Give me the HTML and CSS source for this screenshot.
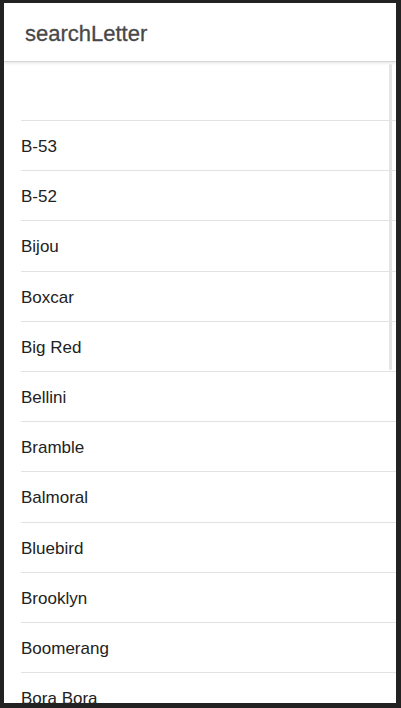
FILE: index.html
```html
<!DOCTYPE html>
<html>
<head>
  <meta charset="UTF-8">
  <title>searchLetter</title>
  <link rel="stylesheet" href="styles.css">
</head>
<body>
  <div class="frame">
    <div class="app">
      <div class="header">
        <h1>searchLetter</h1>
      </div>
      <div class="content">
        <ul class="list">
          <li class="item blank"></li>
          <li class="item">B-53</li>
          <li class="item">B-52</li>
          <li class="item">Bijou</li>
          <li class="item">Boxcar</li>
          <li class="item">Big Red</li>
          <li class="item">Bellini</li>
          <li class="item">Bramble</li>
          <li class="item">Balmoral</li>
          <li class="item">Bluebird</li>
          <li class="item">Brooklyn</li>
          <li class="item">Boomerang</li>
          <li class="item">Bora Bora</li>
        </ul>
        <div class="scrollbar"></div>
      </div>
    </div>
  </div>
</body>
</html>
```

FILE: styles.css
```css
html, body {
  margin: 0;
  padding: 0;
  background: #222;
  font-family: "Liberation Sans", Arial, sans-serif;
}
.frame {
  width: 401px;
  height: 708px;
  box-sizing: border-box;
  padding: 3px 5px 5px 4px;
}
.app {
  background: #fff;
  height: 100%;
  display: flex;
  flex-direction: column;
  overflow: hidden;
}
.header {
  height: 59px;
  flex-shrink: 0;
  display: flex;
  align-items: center;
  padding-left: 21px;
  padding-top: 3px;
  box-sizing: border-box;
  border-bottom: 1px solid #d6d6d6;
  box-shadow: 0 1px 3px rgba(0,0,0,0.12);
  position: relative;
  z-index: 1;
}
h1 {
  margin: 0;
  font-size: 22px;
  font-weight: normal;
  color: #484848;
  -webkit-text-stroke: 0.3px #484848;
}
.content {
  flex: 1;
  position: relative;
  overflow: hidden;
}
.list {
  list-style: none;
  margin: 0;
  padding: 0;
}
.item {
  margin-left: 17px;
  height: 50.2px;
  box-sizing: border-box;
  padding-top: 3px;
  border-bottom: 1px solid #e2e2e2;
  display: flex;
  align-items: center;
  font-size: 17px;
  color: #222;
}
.item.blank {
  height: 59px;
}
.scrollbar {
  position: absolute;
  top: 2px;
  right: 4px;
  width: 3px;
  height: 306px;
  border-radius: 2px;
  background: #e4e4e4;
}
```
